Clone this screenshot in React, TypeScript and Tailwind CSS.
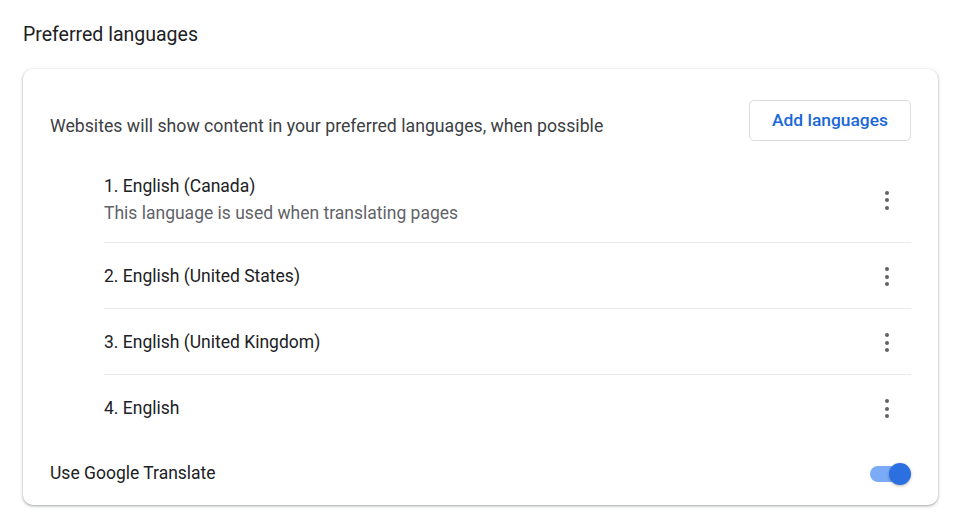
import React from "react";

function Dots() {
  return (
    <div className="flex h-[36px] w-[36px] flex-col items-center justify-center gap-[3.5px]">
      <span className="h-[4px] w-[4px] rounded-full bg-[#5f6368]" />
      <span className="h-[4px] w-[4px] rounded-full bg-[#5f6368]" />
      <span className="h-[4px] w-[4px] rounded-full bg-[#5f6368]" />
    </div>
  );
}

const langs = [
  { name: "1. English (Canada)", sub: "This language is used when translating pages" },
  { name: "2. English (United States)" },
  { name: "3. English (United Kingdom)" },
  { name: "4. English" },
];

export default function App() {
  return (
    <div
      className="min-h-[526px] w-[960px] bg-white px-[23px] pt-[21px] text-[#202124]"
      style={{ fontFamily: "Roboto, 'Liberation Sans', sans-serif" }}
    >
      <h2 className="text-[19.5px] leading-[28px] font-normal text-[#202124]">Preferred languages</h2>
      <div className="mt-[20px] w-[915px] rounded-[10px] bg-white shadow-[0_1px_3px_1px_rgba(60,64,67,0.15),0_1px_2px_0_rgba(60,64,67,0.3)]">
        <div className="flex items-center justify-between pl-[27px] pr-[27px] pt-[31px]">
          <span className="mt-[11px] text-[17.7px] text-[#3c4043]">
            Websites will show content in your preferred languages, when possible
          </span>
          <button className="h-[41px] w-[162px] rounded-[5px] border border-[#dadce0] bg-white text-[17.4px] font-medium text-[#1a67d8]">
            Add languages
          </button>
        </div>
        <div className="ml-[81px] mr-[27px] mt-[19px]">
          {langs.map((l, i) => (
            <div
              key={l.name}
              className={`flex items-center justify-between ${i > 0 ? "border-t border-[#e8eaed]" : ""} ${
                l.sub ? "h-[82px] pb-[2px]" : "h-[66px] pt-[2px]"
              }`}
            >
              <div className="flex flex-col">
                <span className="text-[17.5px] leading-[27px] text-[#202124]">{l.name}</span>
                {l.sub && <span className="text-[17.5px] leading-[27px] text-[#5f6368]">{l.sub}</span>}
              </div>
              <div className="mr-[6px]">
                <Dots />
              </div>
            </div>
          ))}
        </div>
        <div className="flex h-[65px] items-center justify-between pl-[27px] pr-[27px] pt-[2px]">
          <span className="text-[17.5px] text-[#202124]">Use Google Translate</span>
          <div className="relative h-[22px] w-[41px]">
            <div className="absolute left-0 top-[3px] h-[16px] w-[36px] rounded-full bg-[#7baaf7]" />
            <div className="absolute right-0 top-0 h-[22px] w-[22px] rounded-full bg-[#2b6fe0] shadow-[0_1px_3px_rgba(0,0,0,0.3)]" />
          </div>
        </div>
      </div>
    </div>
  );
}
